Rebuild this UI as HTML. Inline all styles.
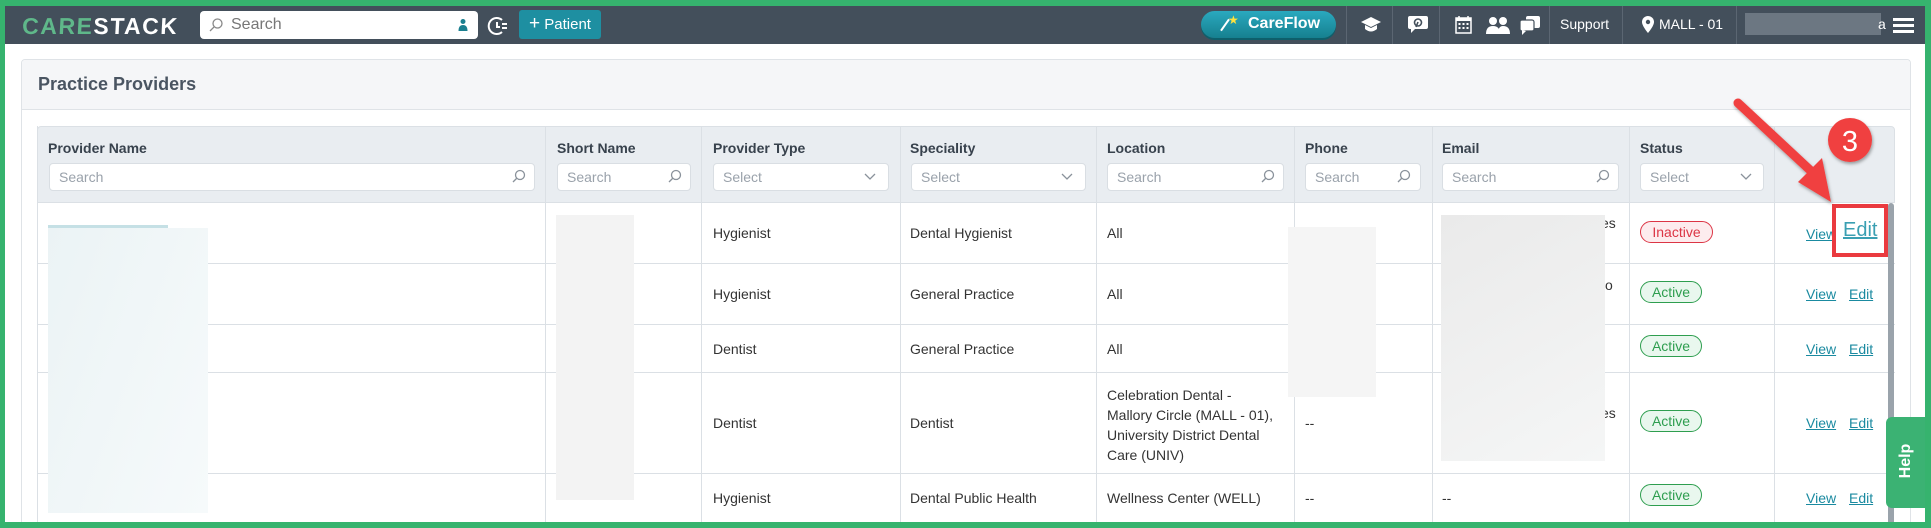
<!DOCTYPE html>
<html><head><meta charset="utf-8">
<style>
*{box-sizing:border-box;margin:0;padding:0}
html,body{width:1931px;height:528px;overflow:hidden}
body{background:#36b36e;font-family:"Liberation Sans",Arial,sans-serif;position:relative}
.a{position:absolute}
#main{position:absolute;left:5px;top:6px;width:1920px;height:516px;background:#fff;overflow:hidden}
.nav{position:absolute;left:0;top:0;width:1920px;height:38px;background:#434f5b}
.div{position:absolute;top:0;width:1px;height:38px;background:#5b6672}
.th{position:absolute;font-weight:bold;font-size:14px;color:#38424d}
.inp{position:absolute;height:28px;background:#fff;border:1px solid #d9dee3;border-radius:4px;font-size:14px;color:#9aa2ab;padding:5px 9px}
.td{position:absolute;font-size:14px;color:#333}
.col{position:absolute;width:1px;background:#dbe0e5}
.row{position:absolute;height:1px;background:#dbe0e5}
.bad{position:absolute;height:22px;border-radius:11px;font-size:14px;padding:2px 0;text-align:center}
.act{border:1px solid #2e9e4f;background:#e9f7ee;color:#2e9e4f;width:62px}
.lnk{position:absolute;font-size:14px;color:#1a8aa0;text-decoration:underline}
</style></head><body>
<div id="main">
<div class="nav">
  <div class="a" style="left:17px;top:7px;font-size:23px;font-weight:900;font-style:italic;letter-spacing:1.5px;transform:skewX(8deg)"><span style="color:#5fb88a">CARE</span><span style="color:#fff">STACK</span></div>
  <div class="a" style="left:195px;top:5px;width:278px;height:28px;background:#fff;border-radius:4px"></div>
  <svg class="a" style="left:203px;top:11px" width="16" height="16" viewBox="0 0 16 16"><circle cx="9.5" cy="6.5" r="4.5" fill="none" stroke="#888" stroke-width="1.3"/><path d="M6.3 9.7L2 14" stroke="#888" stroke-width="1.3"/></svg>
  <div class="a" style="left:226px;top:10px;font-size:16px;color:#777">Search</div>
  <svg class="a" style="left:453px;top:12px" width="10" height="14" viewBox="0 0 10 14"><circle cx="5" cy="3.5" r="2.5" fill="#1a7f8f"/><path d="M0.5 13Q0.5 7 5 7Q9.5 7 9.5 13Z" fill="#1a7f8f"/></svg>
  <svg class="a" style="left:482px;top:9px" width="22" height="22" viewBox="0 0 22 22"><path d="M15 5A8 8 0 1 0 15 17" fill="none" stroke="#fff" stroke-width="2"/><path d="M10 7v5h3" fill="none" stroke="#fff" stroke-width="2"/><path d="M15 9h5M15 13h5" stroke="#fff" stroke-width="2"/></svg>
  <div class="a" style="left:514px;top:4px;width:82px;height:29px;background:#1e8fa1;border-radius:3px;color:#fff;font-size:15px;padding:6px 0 0 10px"><span style="font-size:19px;line-height:14px">+</span> Patient</div>
  <div class="a" style="left:1196px;top:5px;width:135px;height:27px;border-radius:14px;background:linear-gradient(#2aa9bf,#16808f);box-shadow:0 2px 0 #0e5f6b;color:#fff;font-weight:bold;font-size:16px;padding:4px 0 0 47px">CareFlow</div>
  <div class="a" style="left:1223px;top:7px;color:#ffe23d;font-size:12px">★</div>
  <div class="a" style="left:1219px;top:12px;width:2px;height:14px;background:#fff;transform:rotate(35deg)"></div>
  <div class="div" style="left:1341px"></div><div class="div" style="left:1387px"></div><div class="div" style="left:1434px"></div><div class="div" style="left:1544px"></div><div class="div" style="left:1617px"></div><div class="div" style="left:1731px"></div>
  <svg class="a" style="left:1355px;top:10px" width="22" height="18" viewBox="0 0 22 18"><path d="M11 1L21 6L11 11L1 6Z" fill="#fff"/><path d="M5 9v4q6 5 12 0v-4l-6 3z" fill="#fff"/></svg>
  <svg class="a" style="left:1402px;top:8px" width="22" height="20" viewBox="0 0 22 20"><path d="M3 2h16a2 2 0 0 1 2 2v9a2 2 0 0 1-2 2h-11l-4 4v-4h-1a2 2 0 0 1-2-2v-9a2 2 0 0 1 2-2z" fill="#fff"/><circle cx="11" cy="8.5" r="3.5" fill="none" stroke="#434f5b" stroke-width="1.6"/><path d="M9 13L11 8" stroke="#434f5b" stroke-width="1.6"/></svg>
  <svg class="a" style="left:1450px;top:9px" width="17" height="19" viewBox="0 0 17 19"><rect x="1" y="3" width="15" height="15" fill="none" stroke="#fff" stroke-width="1.5"/><rect x="1" y="3" width="15" height="3" fill="#fff"/><path d="M4 1v4M13 1v4" stroke="#fff" stroke-width="1.5"/><g fill="#fff"><rect x="3.5" y="8" width="2" height="2"/><rect x="7.5" y="8" width="2" height="2"/><rect x="11.5" y="8" width="2" height="2"/><rect x="3.5" y="12" width="2" height="2"/><rect x="7.5" y="12" width="2" height="2"/><rect x="11.5" y="12" width="2" height="2"/></g></svg>
  <svg class="a" style="left:1481px;top:10px" width="24" height="18" viewBox="0 0 24 18"><circle cx="7" cy="5" r="4" fill="#fff"/><circle cx="17" cy="5" r="4" fill="#fff"/><path d="M0 18q0-8 7-8q7 0 7 8z M12 18q0-8 5-8q7 0 7 8z" fill="#fff"/></svg>
  <svg class="a" style="left:1515px;top:10px" width="20" height="19" viewBox="0 0 20 19"><rect x="6" y="0" width="14" height="12" rx="2" fill="#fff"/><rect x="0" y="4" width="14" height="11" rx="2" fill="#fff" stroke="#434f5b" stroke-width="1.2"/><path d="M2 14v5l4-4z" fill="#fff"/></svg>
  <div class="a" style="left:1555px;top:10px;color:#fff;font-size:14px">Support</div>
  <svg class="a" style="left:1637px;top:10px" width="12" height="17" viewBox="0 0 12 17"><path d="M6 0a6 6 0 0 1 6 6c0 4-6 11-6 11S0 10 0 6a6 6 0 0 1 6-6z" fill="#fff"/><circle cx="6" cy="6" r="2.2" fill="#434f5b"/></svg>
  <div class="a" style="left:1654px;top:10px;color:#fff;font-size:14px">MALL - 01</div>
  <div class="a" style="left:1740px;top:7px;width:136px;height:22px;background:#6c7782"></div>
  <div class="a" style="left:1873px;top:10px;color:#fff;font-size:14px">a</div>
  <div class="a" style="left:1888px;top:12px;width:21px;height:3px;background:#fff;box-shadow:0 6px 0 #fff,0 12px 0 #fff"></div>
</div>
<!-- card -->
<div class="a" style="left:16px;top:53px;width:1890px;height:470px;border:1px solid #dfe3e7;border-radius:4px;background:#fff"></div>
<div class="a" style="left:17px;top:54px;width:1888px;height:50px;background:#f5f6f8;border-bottom:1px solid #dfe3e7;border-radius:4px 4px 0 0"></div>
<div class="a" style="left:33px;top:68px;font-size:18px;font-weight:bold;color:#4a5562">Practice Providers</div>
<!-- table header -->
<div class="a" style="left:32px;top:120px;width:1858px;height:77px;background:#e9edf1;border:1px solid #dbe0e5;border-radius:4px 4px 0 0"></div>
<div class="th" style="left:43px;top:134px">Provider Name</div>
<div class="th" style="left:552px;top:134px">Short Name</div>
<div class="th" style="left:708px;top:134px">Provider Type</div>
<div class="th" style="left:905px;top:134px">Speciality</div>
<div class="th" style="left:1102px;top:134px">Location</div>
<div class="th" style="left:1300px;top:134px">Phone</div>
<div class="th" style="left:1437px;top:134px">Email</div>
<div class="th" style="left:1635px;top:134px">Status</div>
<div class="inp" style="left:44px;top:157px;width:486px">Search</div>
<div class="inp" style="left:552px;top:157px;width:134px">Search</div>
<div class="inp" style="left:708px;top:157px;width:176px">Select</div>
<div class="inp" style="left:906px;top:157px;width:175px">Select</div>
<div class="inp" style="left:1102px;top:157px;width:177px">Search</div>
<div class="inp" style="left:1300px;top:157px;width:116px">Search</div>
<div class="inp" style="left:1437px;top:157px;width:177px">Search</div>
<div class="inp" style="left:1635px;top:157px;width:124px">Select</div>
<svg class="a" style="left:0;top:0" width="1920" height="516">
<g fill="none" stroke="#8a929b" stroke-width="1.3">
<circle cx="515" cy="169" r="4.5"/><path d="M512 172l-4 4"/>
<circle cx="671" cy="169" r="4.5"/><path d="M668 172l-4 4"/>
<circle cx="1264" cy="169" r="4.5"/><path d="M1261 172l-4 4"/>
<circle cx="1400" cy="169" r="4.5"/><path d="M1397 172l-4 4"/>
<circle cx="1599" cy="169" r="4.5"/><path d="M1596 172l-4 4"/>
<path d="M860 168l5 5 5-5M1057 168l5 5 5-5M1736 168l5 5 5-5"/>
</g></svg>
<!-- grid -->
<div class="col" style="left:32px;top:120px;height:396px"></div>
<div class="col" style="left:540px;top:120px;height:396px"></div>
<div class="col" style="left:696px;top:120px;height:396px"></div>
<div class="col" style="left:895px;top:120px;height:396px"></div>
<div class="col" style="left:1091px;top:120px;height:396px"></div>
<div class="col" style="left:1289px;top:120px;height:396px"></div>
<div class="col" style="left:1427px;top:120px;height:396px"></div>
<div class="col" style="left:1624px;top:120px;height:396px"></div>
<div class="col" style="left:1769px;top:120px;height:396px"></div>
<div class="row" style="left:32px;top:257px;width:1858px"></div>
<div class="row" style="left:32px;top:318px;width:1858px"></div>
<div class="row" style="left:32px;top:366px;width:1858px"></div>
<div class="row" style="left:32px;top:467px;width:1858px"></div>
<!-- cells -->
<div class="td" style="left:708px;top:219px">Hygienist</div><div class="td" style="left:905px;top:219px">Dental Hygienist</div><div class="td" style="left:1102px;top:219px">All</div>
<div class="td" style="left:708px;top:280px">Hygienist</div><div class="td" style="left:905px;top:280px">General Practice</div><div class="td" style="left:1102px;top:280px">All</div>
<div class="td" style="left:708px;top:335px">Dentist</div><div class="td" style="left:905px;top:335px">General Practice</div><div class="td" style="left:1102px;top:335px">All</div>
<div class="td" style="left:708px;top:409px">Dentist</div><div class="td" style="left:905px;top:409px">Dentist</div>
<div class="td" style="left:1102px;top:379px;line-height:20px">Celebration Dental -<br>Mallory Circle (MALL - 01),<br>University District Dental<br>Care (UNIV)</div>
<div class="td" style="left:1300px;top:409px">--</div>
<div class="td" style="left:708px;top:484px">Hygienist</div><div class="td" style="left:905px;top:484px">Dental Public Health</div><div class="td" style="left:1102px;top:484px">Wellness Center (WELL)</div>
<div class="td" style="left:1300px;top:484px">--</div><div class="td" style="left:1437px;top:484px">--</div>
<div class="td" style="left:1596px;top:209px">es</div><div class="td" style="left:1600px;top:271px">o</div><div class="td" style="left:1596px;top:399px">es</div>
<!-- blurs -->
<div class="a" style="left:43px;top:222px;width:160px;height:285px;background:linear-gradient(110deg,#ebf3f5,#f6fafb)"></div>
<div class="a" style="left:43px;top:219px;width:120px;height:3px;background:#c5e0e5"></div>
<div class="a" style="left:551px;top:209px;width:78px;height:285px;background:#f3f3f3"></div>
<div class="a" style="left:1283px;top:221px;width:88px;height:170px;background:#f5f5f5"></div>
<div class="a" style="left:1436px;top:209px;width:164px;height:246px;background:linear-gradient(150deg,#eaeaea,#f5f6f6)"></div>
<!-- status -->
<div class="bad" style="left:1635px;top:215px;width:73px;border:1px solid #dc3545;background:#fdecee;color:#dc3545">Inactive</div>
<div class="bad act" style="left:1635px;top:275px">Active</div>
<div class="bad act" style="left:1635px;top:329px">Active</div>
<div class="bad act" style="left:1635px;top:404px">Active</div>
<div class="bad act" style="left:1635px;top:478px">Active</div>
<div class="lnk" style="left:1801px;top:220px">View</div>
<div class="lnk" style="left:1801px;top:280px">View</div><div class="lnk" style="left:1844px;top:280px">Edit</div>
<div class="lnk" style="left:1801px;top:335px">View</div><div class="lnk" style="left:1844px;top:335px">Edit</div>
<div class="lnk" style="left:1801px;top:409px">View</div><div class="lnk" style="left:1844px;top:409px">Edit</div>
<div class="lnk" style="left:1801px;top:484px">View</div><div class="lnk" style="left:1844px;top:484px">Edit</div>
<!-- scrollbar -->
<div class="a" style="left:1883px;top:197px;width:6px;height:319px;background:#9aa3ab;border-radius:3px 3px 0 0"></div>
<!-- annotation -->
<div class="a" style="left:1827px;top:198px;width:56px;height:53px;border:4px solid #ea3a3f;background:#fff"></div>
<div class="lnk" style="left:1838px;top:213px;font-size:20px;color:#3a9fb2">Edit</div>
<svg class="a" style="left:0;top:0" width="1920" height="516"><defs><filter id="s"><feDropShadow dx="1" dy="2" stdDeviation="1.5" flood-opacity="0.35"/></filter></defs>
<g filter="url(#s)"><path d="M1733 97L1806 165" stroke="#f0403f" stroke-width="9" stroke-linecap="round"/><path d="M1826 196L1793 176L1817 152Z" fill="#f0403f"/>
<circle cx="1845" cy="134" r="22" fill="#f0403f"/></g>
<text x="1845" y="145" font-family="Liberation Sans" font-size="29" fill="#fff" text-anchor="middle">3</text></svg>
<!-- help -->
<div class="a" style="left:1881px;top:411px;width:40px;height:91px;background:#3bb273;border-radius:6px 0 0 6px"></div>
<div class="a" style="left:1880px;top:446px;width:42px;color:#fff;font-weight:bold;font-size:16px;transform:rotate(-90deg);text-align:center">Help</div>
</div>
</body></html>
